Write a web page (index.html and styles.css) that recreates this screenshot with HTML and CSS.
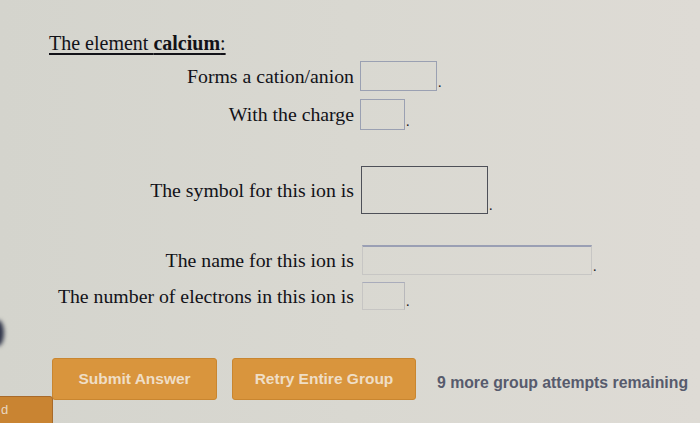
FILE: index.html
```html
<!DOCTYPE html>
<html>
<head>
<meta charset="utf-8">
<link rel="stylesheet" href="styles.css">
</head>
<body>
<div class="page">
  <div class="title"><span class="u">The element <b>calcium</b>:</span></div>
  <div class="rows">
    <div class="row r1"><span class="label">Forms a cation/anion</span><span class="box b1"></span><span class="dot">.</span></div>
    <div class="row r2"><span class="label">With the charge</span><span class="box b2"></span><span class="dot">.</span></div>
    <div class="row r3"><span class="label">The symbol for this ion is</span><span class="box b3"></span><span class="dot">.</span></div>
    <div class="row r4"><span class="label">The name for this ion is</span><span class="box b4"></span><span class="dot">.</span></div>
    <div class="row r5"><span class="label">The number of electrons in this ion is</span><span class="box b5"></span><span class="dot">.</span></div>
  </div>
  <div class="actions">
    <div class="btn submit">Submit Answer</div>
    <div class="btn retry">Retry Entire Group</div>
    <div class="status">9 more group attempts remaining</div>
  </div>
  <div class="stub">d</div>
  <div class="blob"></div>
</div>
</body>
</html>
```
FILE: styles.css
```css
html, body {
  margin: 0;
  padding: 0;
}
body {
  width: 700px;
  height: 423px;
  overflow: hidden;
  background: linear-gradient(90deg, #d4d4cd 0%, #d9d8d1 50%, #dedbd5 100%);
}
.page {
  position: relative;
  width: 700px;
  height: 423px;
  font-family: "Liberation Serif", "Times New Roman", serif;
  color: #121218;
}
.title {
  padding: 32px 0 0 49px;
  font-size: 20px;
  line-height: 23px;
  height: 23px;
}
.u {
  text-decoration: underline;
  text-decoration-thickness: 1.5px;
  text-underline-offset: 3px;
}
.rows {
  display: flex;
  flex-direction: column;
  margin-top: 6px;
}
.row {
  display: flex;
  align-items: center;
  font-size: 19.8px;
}
.label {
  width: 354px;
  text-align: right;
  flex: none;
}
.box {
  display: block;
  margin-left: 6px;
  border: 1px solid #9aa0b2;
  box-sizing: border-box;
  flex: none;
}
.dot {
  align-self: flex-end;
  font-size: 14px;
  line-height: 14px;
  margin-left: 1px;
  padding-bottom: 1px;
}
.b1 { width: 77px; height: 30px; }
.b2 { width: 45px; height: 31px; }
.r2 { margin-top: 8px; }
.b3 {
  width: 127px;
  height: 48px;
  border-color: #4e5058;
  margin-left: 7px;
}
.r3 { margin-top: 36px; }
.b4 {
  width: 230px;
  height: 30px;
  margin-left: 8px;
  border-color: #c7c6c4;
  border-top-color: #9a9fb4;
  border-top-width: 2px;
}
.r4 { margin-top: 31px; }
.b5 {
  width: 43px;
  height: 28px;
  margin-left: 8px;
  border-color: #c6c5c3;
  border-top-color: #a9acbb;
  border-right-color: #b8b8bb;
}
.r5 { margin-top: 7px; }
.actions {
  display: flex;
  align-items: center;
  margin-top: 48px;
  margin-left: 52px;
  font-family: "Liberation Sans", Arial, sans-serif;
  font-weight: bold;
  font-size: 15.5px;
}
.btn {
  height: 42px;
  box-sizing: border-box;
  border: 1px solid #c98630;
  border-radius: 3px;
  background: #d9953d;
  color: #efdec6;
  display: flex;
  align-items: center;
  justify-content: center;
  flex: none;
}
.submit { width: 165px; }
.retry { width: 184px; margin-left: 15px; }
.status {
  margin-left: 21px;
  color: #575b6d;
  font-size: 15.8px;
  padding-top: 8px;
}
.stub {
  position: absolute;
  left: -4px;
  top: 396px;
  width: 57px;
  height: 30px;
  background: #c98432;
  border: 1px solid #a86a2a;
  border-radius: 3px;
  box-sizing: border-box;
  color: #e8d6c0;
  font-family: "Liberation Sans", Arial, sans-serif;
  font-size: 13px;
  line-height: 26px;
  padding-left: 4px;
}
.blob {
  position: absolute;
  left: -8px;
  top: 320px;
  width: 12px;
  height: 26px;
  border-radius: 50%;
  background: #2e3348;
  filter: blur(2px);
}
```
